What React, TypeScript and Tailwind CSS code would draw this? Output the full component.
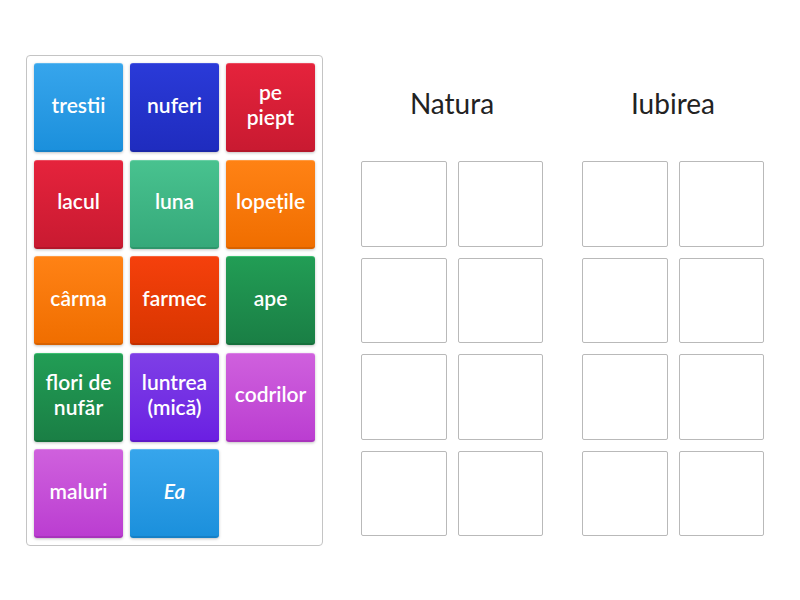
import React from "react";

type Tile = { label: string; bg: string; italic?: boolean };

const tiles: Tile[] = [
  { label: "trestii", bg: "bg-gradient-to-b from-[#36a5ec] to-[#1b90dc] border-t-[#5cb8f0] border-b-[#1680c6]" },
  { label: "nuferi", bg: "bg-gradient-to-b from-[#2a3ad8] to-[#1f2cbf] border-t-[#4656e0] border-b-[#1a26a8]" },
  { label: "pe piept", bg: "bg-gradient-to-b from-[#e5233c] to-[#c91a31] border-t-[#ec4a5e] border-b-[#b3162a]" },
  { label: "lacul", bg: "bg-gradient-to-b from-[#e5233c] to-[#c91a31] border-t-[#ec4a5e] border-b-[#b3162a]" },
  { label: "luna", bg: "bg-gradient-to-b from-[#48c28f] to-[#35a97a] border-t-[#68cfa4] border-b-[#2e966b]" },
  { label: "lopețile", bg: "bg-gradient-to-b from-[#ff8214] to-[#f06e00] border-t-[#ff9a40] border-b-[#d86200]" },
  { label: "cârma", bg: "bg-gradient-to-b from-[#ff8214] to-[#f06e00] border-t-[#ff9a40] border-b-[#d86200]" },
  { label: "farmec", bg: "bg-gradient-to-b from-[#f5400c] to-[#d93600] border-t-[#f86238] border-b-[#c23000]" },
  { label: "ape", bg: "bg-gradient-to-b from-[#229d55] to-[#1a7f45] border-t-[#3cc070] border-b-[#16703c]" },
  { label: "flori de nufăr", bg: "bg-gradient-to-b from-[#229d55] to-[#1a7f45] border-t-[#3cc070] border-b-[#16703c]" },
  { label: "luntrea (mică)", bg: "bg-gradient-to-b from-[#7e3ee6] to-[#6b1fe2] border-t-[#955ce9] border-b-[#5d18c8]" },
  { label: "codrilor", bg: "bg-gradient-to-b from-[#cf60dd] to-[#bb3dd1] border-t-[#da7ee5] border-b-[#a833bc]" },
  { label: "maluri", bg: "bg-gradient-to-b from-[#cf60dd] to-[#bb3dd1] border-t-[#da7ee5] border-b-[#a833bc]" },
  { label: "Ea", bg: "bg-gradient-to-b from-[#36a5ec] to-[#1b90dc] border-t-[#5cb8f0] border-b-[#1680c6]", italic: true },
];

const groups = ["Natura", "Iubirea"];

function Group({ title }: { title: string }) {
  return (
    <div className="flex flex-col items-center">
      <div className="mt-[29px] h-[38px] leading-[38px] text-[28px] text-[#222]">
        {title}
      </div>
      {/* drop slots */}
      <div className="mt-[39px] grid grid-cols-2 gap-x-[11px] gap-y-[11px]">
        {Array.from({ length: 8 }).map((_, i) => (
          <div
            key={i}
            className="w-[85.5px] h-[85.5px] border border-[#b9b9b9] rounded-[2px] bg-white"
          />
        ))}
      </div>
    </div>
  );
}

export default function App() {
  return (
    <div
      className="w-[800px] h-[600px] bg-white flex items-start pt-[55px] pl-[26px]"
      style={{ fontFamily: "Lato, 'Open Sans', sans-serif" }}
    >
      <div className="w-[297px] border border-[#c4c4c4] rounded-[4px] p-[7px]">
        <div className="grid grid-cols-3 gap-x-[7px] gap-y-[7.5px]">
          {tiles.map((t) => (
            <div
              key={t.label}
              className={`h-[89px] rounded-[3px] border-t border-b-2 flex items-center justify-center text-center px-[10px] pb-[6px] text-white text-[21px] leading-[25px] font-semibold shadow-[0_1px_3px_rgba(0,0,0,0.25)] ${t.bg} ${t.italic ? "italic" : ""}`}
            >
              {t.label}
            </div>
          ))}
        </div>
      </div>
      <div className="ml-[38px] flex gap-[39px]">
        {groups.map((g) => (
          <Group key={g} title={g} />
        ))}
      </div>
    </div>
  );
}
